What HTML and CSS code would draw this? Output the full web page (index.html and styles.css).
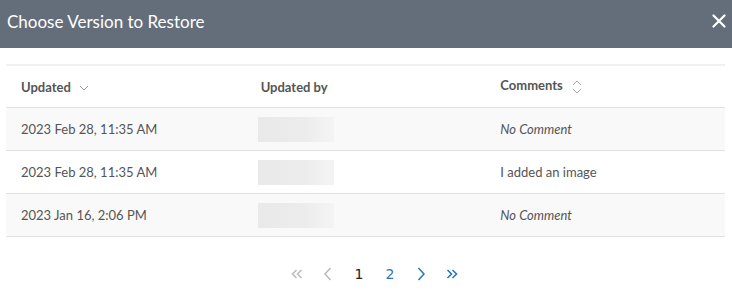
FILE: index.html
```html
<!DOCTYPE html>
<html lang="en">
<head>
    <meta charset="UTF-8">
    <title>Choose Version to Restore</title>
    <link rel="stylesheet" href="styles.css">
</head>
<body>
    <div class="modal">
        <div class="modal-header">
            <h2>Choose Version to Restore</h2>
            <button class="close" aria-label="Close">
                <svg width="14" height="14" viewBox="0 0 14 14"><path d="M1.5 1.5 L12.5 12.5 M12.5 1.5 L1.5 12.5" stroke="#fff" stroke-width="2.2" stroke-linecap="round"/></svg>
            </button>
        </div>
        <div class="modal-body">
            <table class="versions">
                <thead>
                    <tr>
                        <th>Updated
                            <svg class="sort" width="10" height="8" viewBox="0 0 10 8"><path d="M1 2 L5 6 L9 2" fill="none" stroke="#999" stroke-width="1"/></svg>
                        </th>
                        <th>Updated by</th>
                        <th>Comments
                            <svg class="sort" width="12" height="18" viewBox="0 0 12 18"><path d="M2 7 L6 3 L10 7 M2 11 L6 15 L10 11" fill="none" stroke="#aaa" stroke-width="1"/></svg>
                        </th>
                    </tr>
                </thead>
                <tbody>
                    <tr>
                        <td>2023 Feb 28, 11:35 AM</td>
                        <td><span class="blur"></span></td>
                        <td class="none">No Comment</td>
                    </tr>
                    <tr>
                        <td>2023 Feb 28, 11:35 AM</td>
                        <td><span class="blur"></span></td>
                        <td>I added an image</td>
                    </tr>
                    <tr>
                        <td>2023 Jan 16, 2:06 PM</td>
                        <td><span class="blur"></span></td>
                        <td class="none">No Comment</td>
                    </tr>
                </tbody>
            </table>
            <div class="pager">
                <span class="pg off">
                    <svg width="12" height="12" viewBox="0 0 12 12"><path d="M5.5 2 L1.5 6 L5.5 10 M10.5 2 L6.5 6 L10.5 10" fill="none" stroke="currentColor" stroke-width="1.6"/></svg>
                </span>
                <span class="pg off">
                    <svg width="8" height="14" viewBox="0 0 8 14"><path d="M6.5 1 L1 7 L6.5 13" fill="none" stroke="currentColor" stroke-width="1.6"/></svg>
                </span>
                <span class="pg num current">1</span>
                <span class="pg num">2</span>
                <span class="pg">
                    <svg width="8" height="14" viewBox="0 0 8 14"><path d="M1.5 1 L7 7 L1.5 13" fill="none" stroke="currentColor" stroke-width="1.6"/></svg>
                </span>
                <span class="pg">
                    <svg width="12" height="12" viewBox="0 0 12 12"><path d="M1.5 2 L5.5 6 L1.5 10 M6.5 2 L10.5 6 L6.5 10" fill="none" stroke="currentColor" stroke-width="1.6"/></svg>
                </span>
            </div>
        </div>
    </div>
</body>
</html>
```

FILE: styles.css
```css
body {
    margin: 0;
    background: #fff;
    font-family: Lato, "Liberation Sans", sans-serif;
    color: #444;
}
.modal {
    width: 732px;
    height: 302px;
    background: #fff;
}
.modal-header {
    box-sizing: border-box;
    height: 48px;
    background: #646e7b;
    display: flex;
    align-items: center;
    justify-content: space-between;
    padding: 0 6px 6px 7px;
}
.modal-header h2 {
    margin: 0;
    color: #fff;
    font-size: 17px;
    font-weight: 400;
}
.close {
    background: none;
    border: 0;
    padding: 0;
    width: 14px;
    height: 14px;
    display: flex;
    cursor: pointer;
}
.modal-body {
    padding: 16px 7px 0 6px;
}
.versions {
    width: 100%;
    border-collapse: collapse;
    border-top: 2px solid #f0f0f0;
    font-size: 13px;
}
.versions th,
.versions td {
    text-align: left;
    padding: 0 15px;
    height: 42px;
    border-bottom: 1px solid #e2e2e2;
    width: 33.3%;
}
.versions th {
    font-weight: 700;
    color: #555;
    height: 41px;
}
.versions td {
    color: #555;
}
.versions tbody tr:nth-child(odd) {
    background: #f9f9f9;
}
.sort {
    vertical-align: middle;
    margin-left: 5px;
}
.none {
    font-style: italic;
}
.blur {
    display: block;
    width: 76px;
    height: 25px;
    margin-left: -3px;
    background: linear-gradient(90deg, #e9e9e9, #ececec 60%, #f4f4f4);
}
.pager {
    display: flex;
    justify-content: center;
    align-items: center;
    margin-top: 27px;
    padding-left: 18px;
}
.pg {
    width: 31px;
    height: 20px;
    display: flex;
    align-items: center;
    justify-content: center;
    color: #2a78b5;
    font-family: "DejaVu Sans", sans-serif;
    font-size: 14px;
}
.pg.off {
    color: #bbb;
}
.pg.current {
    color: #222;
}
```
